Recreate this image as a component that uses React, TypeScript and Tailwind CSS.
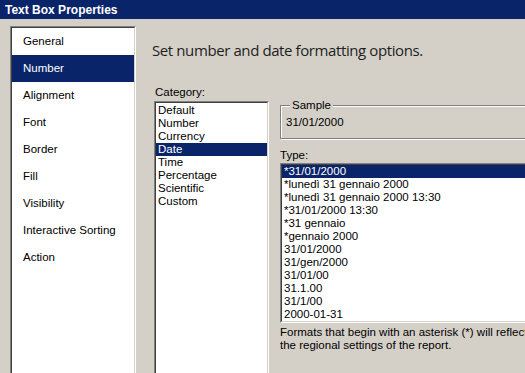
import React from "react";

const Sunken = ({ className, children }: { className?: string; children?: React.ReactNode }) => (
  <div className={"border border-t-[#808080] border-l-[#808080] border-r-white border-b-white " + (className ?? "")}>
    <div className="h-full border border-t-[#404040] border-l-[#404040] border-r-[#d4d0c8] border-b-[#d4d0c8] bg-white">
      {children}
    </div>
  </div>
);

const nav = ["General", "Number", "Alignment", "Font", "Border", "Fill", "Visibility", "Interactive Sorting", "Action"];
const cats = ["Default", "Number", "Currency", "Date", "Time", "Percentage", "Scientific", "Custom"];
const types = [
  "*31/01/2000",
  "*lunedì 31 gennaio 2000",
  "*lunedì 31 gennaio 2000 13:30",
  "*31/01/2000 13:30",
  "*31 gennaio",
  "*gennaio 2000",
  "31/01/2000",
  "31/gen/2000",
  "31/01/00",
  "31.1.00",
  "31/1/00",
  "2000-01-31",
];

export default function App() {
  return (
    <div className="w-[525px] h-[373px] overflow-hidden bg-[#d4d0c8] font-['Liberation_Sans',Arial,sans-serif] text-[11.5px] text-black flex flex-col">
      <div className="h-[19px] shrink-0 bg-[#0a246a] text-white font-bold text-[12px] pl-[5px] flex items-center leading-none">
        Text Box Properties
      </div>
      <div className="flex flex-1 min-h-0">
        <div className="pl-[10px] pt-[7px] shrink-0">
          <Sunken className="w-[126px] h-[400px]">
            {nav.map((n, i) => (
              <div
                key={n}
                className={
                  "h-[27px] flex items-center pl-[11px] whitespace-nowrap " +
                  (i === 1 ? "bg-[#0a246a] text-white" : "")
                }
              >
                {n}
              </div>
            ))}
          </Sunken>
        </div>
        <div className="flex-1 min-w-0 pl-[16px]">
          <div className="mt-[21px] h-[20px] leading-[20px] text-[15px] text-[#1e1e1e] whitespace-nowrap font-['Open_Sans',sans-serif] tracking-[-0.4px]">
            Set number and date formatting options.
          </div>
          <div className="mt-[26px] ml-[2px] flex">
            <div className="w-[115px] shrink-0">
              <div className="h-[13px] leading-[13px] pl-[1px]">Category:</div>
              <Sunken className="mt-[2px] h-[300px]">
                <div className="pt-[1px]">
                  {cats.map((c, i) => (
                    <div
                      key={c}
                      className={
                        "h-[13px] leading-[13px] pl-[2px] whitespace-nowrap " +
                        (i === 3 ? "bg-[#0a246a] text-white" : "")
                      }
                    >
                      {c}
                    </div>
                  ))}
                </div>
              </Sunken>
            </div>
            <div className="ml-[11px] w-[300px] shrink-0">
              <fieldset className="mt-[13px] border border-[#808080] pl-[5px] pb-[9px] shadow-[inset_1px_1px_0_#fff,1px_1px_0_#fff]">
                <legend className="ml-[4px] px-[2px] h-[13px] leading-[13px] bg-[#d4d0c8]">Sample</legend>
                <div className="mt-[4px] h-[13px] leading-[13px]">31/01/2000</div>
              </fieldset>
              <div className="mt-[10px] h-[13px] leading-[13px]">Type:</div>
              <Sunken className="mt-[1px]">
                {types.map((t, i) => (
                  <div
                    key={t}
                    className={
                      "h-[13px] leading-[13px] pl-[2px] whitespace-nowrap " +
                      (i === 0 ? "bg-[#0a246a] text-white" : "")
                    }
                  >
                    {t}
                  </div>
                ))}
              </Sunken>
              <div className="mt-[3px] leading-[13px] whitespace-nowrap">
                Formats that begin with an asterisk (*) will reflect
                <br />
                the regional settings of the report.
              </div>
            </div>
          </div>
        </div>
      </div>
    </div>
  );
}
